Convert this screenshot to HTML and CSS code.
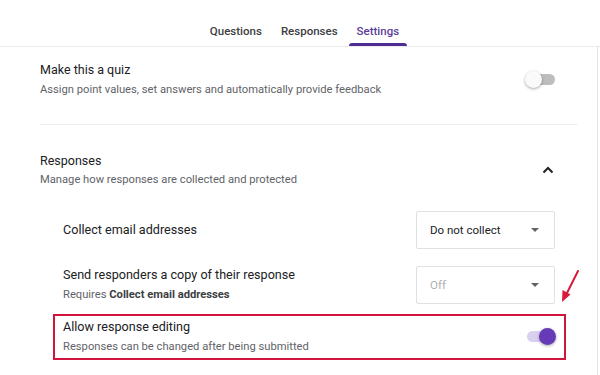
FILE: index.html
```html
<!doctype html>
<html lang="en">
<head>
    <meta charset="UTF-8">
    <title>Settings</title>
    <link rel="stylesheet" href="styles.css">
</head>
<body>
<div class="tabs">
    <div class="tab">Questions</div>
    <div class="tab">Responses</div>
    <div class="tab active">Settings</div>
</div>

<div class="panel">
    <div class="section quiz">
        <div class="row">
            <div class="text">
                <div class="title">Make this a quiz</div>
                <div class="desc">Assign point values, set answers and automatically provide feedback</div>
            </div>
            <div class="switch"><span class="knob"></span></div>
        </div>
    </div>

    <div class="section responses">
        <div class="row head">
            <div class="text">
                <div class="title">Responses</div>
                <div class="desc">Manage how responses are collected and protected</div>
            </div>
            <svg class="chevron" width="14" height="14" viewBox="0 0 14 14">
                <path d="M2.5 9.5 L7 5 L11.5 9.5" fill="none" stroke="#202124" stroke-width="2"/>
            </svg>
        </div>

        <div class="options">
            <div class="option first">
                <div class="text">
                    <div class="label">Collect email addresses</div>
                </div>
                <div class="select">
                    <span>Do not collect</span>
                    <span class="caret"></span>
                </div>
            </div>

            <div class="option">
                <div class="text">
                    <div class="label">Send responders a copy of their response</div>
                    <div class="desc">Requires <b>Collect email addresses</b></div>
                </div>
                <div class="select disabled">
                    <span>Off</span>
                    <span class="caret"></span>
                </div>
            </div>

            <div class="option marked">
                <div class="text">
                    <div class="label">Allow response editing</div>
                    <div class="desc">Responses can be changed after being submitted</div>
                </div>
                <div class="switch on"><span class="knob"></span></div>
            </div>
        </div>
    </div>

    <!-- red annotation arrow -->
    <svg class="pointer" width="30" height="40" viewBox="0 0 30 40">
        <path d="M24 2 L12.5 25" stroke="#d81a3c" stroke-width="2" fill="none" stroke-linecap="round"/>
        <path d="M8 33 L8.5 21 L16.5 25.5 Z" fill="#d81a3c"/>
    </svg>
</div>
</body>
</html>
```

FILE: styles.css
```css
body {
    margin: 0;
    background: #fff;
    font-family: Roboto, "Liberation Sans", Arial, sans-serif;
    color: #202124;
}

.tabs {
    display: flex;
    justify-content: center;
    gap: 3px;
    height: 47px;
    padding-left: 9px;
    border-bottom: 1px solid #ebebeb;
    box-sizing: border-box;
}

.tab {
    position: relative;
    padding: 22px 8px 0;
    line-height: 18px;
    font-size: 11.5px;
    font-weight: 500;
    color: #3c4043;
}

.tab.active {
    color: #5b3d98;
}

.tab.active::after {
    content: "";
    position: absolute;
    left: 0;
    right: 0;
    bottom: 0;
    height: 3px;
    border-radius: 3px 3px 0 0;
    background: #4f2c8f;
}

.panel {
    position: relative;
    margin-right: 2px;
    padding: 0 19px 14px 40px;
    border-right: 1px solid #e3e3e3;
    min-height: 330px;
}

.section.quiz {
    padding: 14px 0 26px;
    border-bottom: 1px solid #efefef;
}

.section.responses {
    padding-top: 27px;
}

.row {
    display: flex;
    align-items: center;
    justify-content: space-between;
    padding-right: 23px;
}

.title {
    font-size: 12.5px;
    line-height: 18px;
    color: #202124;
}

.desc {
    margin-top: 3px;
    font-size: 11.2px;
    line-height: 16px;
    color: #5f6368;
}

.head .desc {
    margin-top: 2px;
}

.desc b {
    font-weight: 700;
    color: #3c4043;
}

.chevron {
    display: block;
}

.options {
    margin: 23px 23px 0 23px;
}

.option {
    display: flex;
    align-items: flex-start;
    justify-content: space-between;
    margin-bottom: 18px;
}

.option.first {
    align-items: center;
    margin-bottom: 17px;
}

.label {
    font-size: 12.6px;
    line-height: 18px;
    color: #202124;
}

.option .desc {
    margin-top: 3px;
}

.select {
    display: flex;
    align-items: center;
    justify-content: space-between;
    width: 139px;
    height: 38px;
    padding: 0 15px 0 13px;
    box-sizing: border-box;
    border: 1px solid #e0e0e0;
    border-radius: 2px;
    font-size: 11.5px;
    color: #202124;
}

.select.disabled {
    color: #b0b0b0;
}

.caret {
    width: 0;
    height: 0;
    border-left: 4px solid transparent;
    border-right: 4px solid transparent;
    border-top: 4px solid #5f6368;
}

.option.marked {
    align-items: center;
    margin: -8px -11px 0 -10px;
    padding: 2px 9px 3px 8px;
    border: 2px solid #d0143c;
}

.switch {
    position: relative;
    width: 28px;
    height: 11px;
    border-radius: 6px;
    background: #bdbdbd;
    flex-shrink: 0;
}

.switch .knob {
    position: absolute;
    top: -3px;
    left: -2px;
    width: 17px;
    height: 17px;
    border-radius: 50%;
    background: #fafafa;
    box-shadow: 0 1px 3px rgba(0, 0, 0, 0.35);
}

.switch.on {
    background: #d9d0ef;
}

.switch.on .knob {
    left: auto;
    right: -1px;
    background: #673ab7;
}

.pointer {
    position: absolute;
    left: 554px;
    top: 222px;
}
```
